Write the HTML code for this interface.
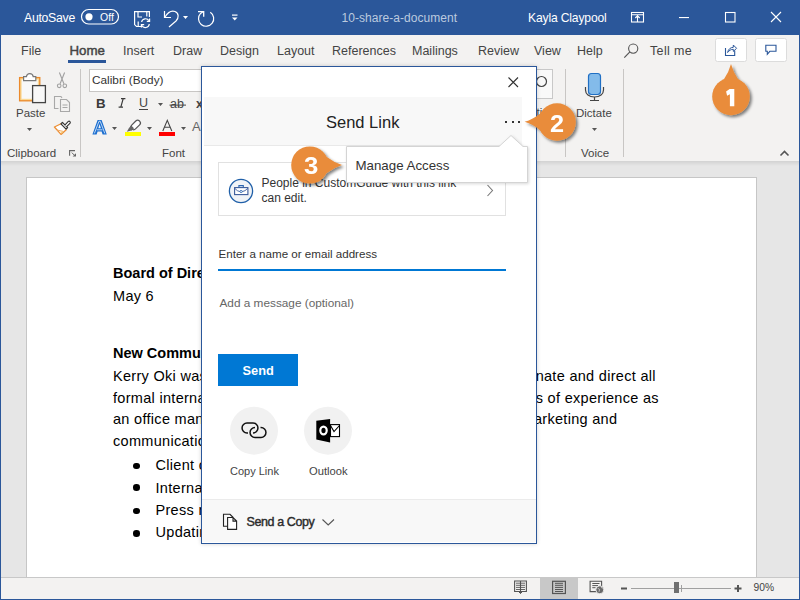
<!DOCTYPE html>
<html><head><meta charset="utf-8">
<style>
*{margin:0;padding:0;box-sizing:border-box}
html,body{width:800px;height:600px;overflow:hidden;background:#e6e6e6;font-family:"Liberation Sans",sans-serif}
.a{position:absolute;white-space:nowrap;line-height:1}
svg.a{overflow:visible}
.tw{color:#fff;font-size:11.5px}
.tab{color:#444;font-size:12.5px;top:45px}
.rl{color:#444;font-size:11.5px}
.doc{font-size:14.5px;color:#000}
.callout{width:38px;height:38px;border-radius:50%;background:#e98c3a;color:#fff;font-weight:bold;font-size:22px;text-align:center;line-height:38px}
</style></head><body>
<!-- TITLE BAR -->
<div class="a" style="left:0;top:0;width:800px;height:35px;background:#2b579a"></div>
<div class="a tw" style="left:24px;top:11.6px;font-size:12.3px;letter-spacing:-0.3px">AutoSave</div>
<svg class="a" style="left:0;top:0" width="800" height="35">
 <rect x="81.5" y="9.5" width="37" height="14.5" rx="7.25" fill="none" stroke="#fff" stroke-width="1.2"/>
 <circle cx="89" cy="16.8" r="3.6" fill="#fff"/>
 <!-- save icon -->
 <path d="M141.5 26.5 H136.5 L134.6 24.6 V11.6 H149.4 V17" fill="none" stroke="#fff" stroke-width="1.2"/>
 <path d="M138 11.6 V17 H142 M146.8 11.6 V16.5 M138.2 21.5 V26.5" fill="none" stroke="#fff" stroke-width="1.2"/>
 <path d="M141.6 22 A4 4 0 0 1 149 20.8 M149.3 24 A4 4 0 0 1 141.8 25.5" fill="none" stroke="#fff" stroke-width="1.2"/>
 <path d="M149.6 18.5 V21.3 H146.8 M141.4 27.5 V24.7 H144.2" fill="none" stroke="#fff" stroke-width="1.2"/>
 <!-- undo -->
 <path d="M164.5 11 V17.5 H171" fill="none" stroke="#fff" stroke-width="1.2"/>
 <path d="M165 17 C168 12 172 10.5 175 11.5 C179 13 179 18 176 21 L169 27" fill="none" stroke="#fff" stroke-width="1.2"/>
 <path d="M183 16 H188 L185.5 19 Z" fill="#fff"/>
 <!-- redo -->
 <path d="M210.3 12.3 A7.6 7.6 0 1 1 200.6 13.4 L203.2 11.6" fill="none" stroke="#fff" stroke-width="1.2"/>
 <path d="M198 11.6 H203.7 V16.8" fill="none" stroke="#fff" stroke-width="1.3"/>
 <!-- customize -->
 <rect x="232" y="14.5" width="5.5" height="1.2" fill="#fff"/>
 <path d="M232 17.5 H237.5 L234.75 20.5 Z" fill="#fff"/>
 <!-- ribbon display -->
 <rect x="631.5" y="12.5" width="12" height="9.5" fill="none" stroke="#fff" stroke-width="1.1"/>
 <path d="M631.5 14.8 H643.5 M637.5 15.5 V22 M635.3 18 L637.5 15.8 L639.7 18" fill="none" stroke="#fff" stroke-width="1.1"/>
 <rect x="679" y="17" width="10" height="1.1" fill="#fff"/>
 <rect x="725.5" y="12.5" width="9.5" height="9.5" fill="none" stroke="#fff" stroke-width="1.1"/>
 <path d="M771 12 L781 22 M781 12 L771 22" stroke="#fff" stroke-width="1.1"/>
</svg>
<div class="a" style="left:100px;top:11.9px;color:#fff;font-size:10.5px">Off</div>
<div class="a tw" style="left:341.5px;top:12.3px;color:#bccadf;font-size:12px;letter-spacing:0.05px">10-share-a-document</div>
<div class="a tw" style="left:528px;top:11.7px;font-size:12.1px;letter-spacing:-0.15px">Kayla Claypool</div>

<!-- RIBBON -->
<div class="a" style="left:1px;top:35px;width:798px;height:126px;background:#f3f2f1"></div>
<div class="a" style="left:1px;top:161px;width:798px;height:5px;background:linear-gradient(#d2d2d2,#e6e6e6)"></div>
<div class="a tab" style="left:21px">File</div>
<div class="a tab" style="left:69.5px;top:44.3px;color:#444;font-size:13.3px;-webkit-text-stroke:0.45px #444">Home</div>
<div class="a" style="left:68px;top:60px;width:38px;height:3px;background:#2b579a"></div>
<div class="a tab" style="left:123px">Insert</div>
<div class="a tab" style="left:173px">Draw</div>
<div class="a tab" style="left:220px">Design</div>
<div class="a tab" style="left:277px">Layout</div>
<div class="a tab" style="left:332px">References</div>
<div class="a tab" style="left:412px">Mailings</div>
<div class="a tab" style="left:478px">Review</div>
<div class="a tab" style="left:534px">View</div>
<div class="a tab" style="left:577px">Help</div>
<div class="a tab" style="left:650px;letter-spacing:0.35px">Tell me</div>

<!-- ribbon groups -->
<svg class="a" style="left:0;top:0" width="800" height="170">
 <!-- tab right buttons -->
 <rect x="715.5" y="38.5" width="31" height="23" rx="2" fill="#fff" stroke="#dcdcdc"/>
 <rect x="755.5" y="38.5" width="31" height="23" rx="2" fill="#fff" stroke="#dcdcdc"/>
 <path d="M725.5 48 V55.5 H734.7 V50.5" fill="none" stroke="#2b579a" stroke-width="1.1"/>
 <path d="M727.6 52.5 C728.3 49 730.5 47.5 733.3 47.3 V45 L736.6 48.3 L733.3 51.4 V49.3 C731 49.3 729 50.5 727.6 52.5 Z" fill="none" stroke="#2b579a" stroke-width="1"/>
 <path d="M765.8 45.3 H776 V51.3 H769.8 L767.3 54.3 V51.3 H765.8 Z" fill="none" stroke="#2b579a" stroke-width="1.1"/>
 <!-- search icon -->
 <circle cx="633.2" cy="48.6" r="4.6" fill="none" stroke="#555" stroke-width="1.1"/>
 <path d="M629.9 51.9 L624.3 57.6" stroke="#555" stroke-width="1.2"/>
 <!-- separators -->
 <rect x="80" y="69" width="1" height="88" fill="#c8c6c4"/>
 <rect x="565" y="69" width="1" height="88" fill="#c8c6c4"/>
 <rect x="623" y="69" width="1" height="88" fill="#c8c6c4"/>
 <!-- paste -->
 <rect x="19.6" y="77.6" width="20.2" height="23.2" fill="#fbd892" stroke="#ec8a2b" stroke-width="1.3"/>
 <rect x="21.6" y="79.6" width="16.2" height="19.2" fill="#f8f8f8"/>
 <path d="M23.6 80.6 V76.6 H26.4 C27 72.6 32.6 72.6 33.2 76.6 H35.8 V80.6 Z" fill="#fff" stroke="#777" stroke-width="1.2"/>
 <rect x="32.6" y="85.6" width="12.8" height="17" fill="#f8f8f8" stroke="#444" stroke-width="1.3"/>
 <path d="M27 128 H32 L29.5 131 Z" fill="#555"/>
 <!-- cut -->
 <path d="M59.4 72.5 L63.9 83.8 M64.6 72.5 L60.1 83.8" stroke="#a0a0a0" stroke-width="1.1"/>
 <circle cx="59.2" cy="85.8" r="1.8" fill="none" stroke="#a0a0a0" stroke-width="1.1"/>
 <circle cx="64.8" cy="85.8" r="1.8" fill="none" stroke="#a0a0a0" stroke-width="1.1"/>
 <!-- copy -->
 <path d="M58.5 108.5 H54.5 V96.5 H61 L62 98" fill="none" stroke="#a8a8a8" stroke-width="1.1"/>
 <path d="M60.5 99.5 H66.5 L69.5 102.5 V111.5 H60.5 Z M62.5 105 H67.5 M62.5 107.5 H67.5" fill="none" stroke="#a8a8a8" stroke-width="1.1"/>
 <!-- format painter -->
 <path d="M61.5 123.5 L54.4 127 L61 134.4 L66.5 129.5" fill="#fff" stroke="#ec8f35" stroke-width="1.3" stroke-linejoin="round"/>
 <path d="M57 130 L63.5 131.5" stroke="#f2a860" stroke-width="1"/>
 <path d="M60.5 131.8 L63.2 131.5 L61.5 133.5 Z" fill="#f7d37a"/>
 <path d="M60.9 123.9 L62.4 122.4 L67.6 127.6 L66.1 129.1 Z" fill="#fff" stroke="#333" stroke-width="1.2" stroke-linejoin="round"/>
 <path d="M64.8 125.1 L68.3 121.4 A1.3 1.3 0 0 1 70.1 123.2 L66.4 126.8" fill="#fff" stroke="#333" stroke-width="1.1"/>
 <!-- launcher -->
 <path d="M69.6 155.8 V150.6 H75" fill="none" stroke="#666" stroke-width="1.1"/>
 <path d="M71.8 152.6 L74.5 155.3" stroke="#666" stroke-width="1"/>
 <path d="M76 153.2 V156.6 H72.6 Z" fill="#666"/>
 <!-- font box -->
 <rect x="89.5" y="69.5" width="130" height="22" fill="#fff" stroke="#c8c6c4"/>
 <!-- underline and arrows -->
 <rect x="139" y="109" width="9" height="1" fill="#444"/>
 <path d="M158 103 H163 L160.5 106 Z M112 127 H117 L114.5 130 Z M147 127 H152 L149.5 130 Z M181 127 H186 L183.5 130 Z" fill="#555"/>
 <rect x="169.5" y="104.6" width="16.5" height="1" fill="#444"/>
 <!-- highlight pen -->
 <path d="M92.4 134.4 L97.6 120 H101.6 L106.8 134.4 H102.6 L101.6 131.4 H97.6 L96.6 134.4 Z M98.3 128.2 L99.6 124 L100.9 128.2 Z" fill="#1c6fd0" fill-rule="evenodd"/>
 <path d="M94.4 133.4 L99 121.2 H100.2 L104.8 133.4 M96.8 129.8 H102.4" fill="none" stroke="#e6f0fb" stroke-width="0.8"/>
 <path d="M121 98.7 H125.4 M118.6 107.2 H123 M123.2 98.7 L120.8 107.2" fill="none" stroke="#3a3a3a" stroke-width="1.2"/>

 <g transform="translate(0.3 1) rotate(-45 135 124.3)"><rect x="130" y="121.6" width="11" height="5.4" rx="2.6" fill="#fff" stroke="#555" stroke-width="1.2"/></g>
 <path d="M126.8 131.8 L129.3 127.5 L132.1 130.3 Z M128.5 128.4 L131.3 125.6 L134 128.3 L131.2 131.1 Z" fill="#666"/>
 <path d="M162.8 131 L167.3 120.3 L171.8 131 M164.4 127.3 H170.2" fill="none" stroke="#444" stroke-width="1.1"/>
 <rect x="125" y="132" width="16" height="4" fill="#ffff00"/>
 <rect x="159" y="132" width="16" height="4" fill="#ff0000"/>
 <!-- mic -->
 <rect x="588.5" y="73.5" width="12" height="21" rx="3" fill="#83bbea" stroke="#1f6fc4" stroke-width="1.2"/>
 <path d="M585.5 87 V90 C585.5 94 589 97 594.5 97 C600 97 603.5 94 603.5 90 V87 M594.5 97 V100 M590 100.5 H599" fill="none" stroke="#444" stroke-width="1.2"/>
 <path d="M592 128 H597 L594.5 131 Z" fill="#555"/>
 <!-- collapse caret -->
 <path d="M780.5 155.5 L784.5 151.5 L788.5 155.5" fill="none" stroke="#555" stroke-width="1.6"/>
 <!-- behind-dialog search box -->
 <rect x="520" y="69.5" width="32.5" height="29" fill="#f9f9f9" stroke="#c8c8c8"/>
 <circle cx="541.5" cy="81.5" r="5" fill="none" stroke="#444" stroke-width="1.2"/>
</svg>
<div class="a" style="left:92px;top:75px;color:#333;font-size:11.8px">Calibri (Body)</div>
<div class="a rl" style="left:16px;top:108px">Paste</div>
<div class="a rl" style="left:7px;top:147.6px">Clipboard</div>
<div class="a rl" style="left:162px;top:147.6px">Font</div>
<div class="a" style="left:96px;top:96.6px;font-weight:bold;color:#3a3a3a;font-size:13.3px">B</div>
<div class="a" style="left:139px;top:97px;color:#444;font-size:12.5px">U</div>
<div class="a" style="left:170px;top:98px;color:#444;font-size:12.5px">ab</div>
<div class="a" style="left:196px;top:98px;color:#444;font-size:12.5px;font-weight:bold">x</div>
<div class="a" style="left:192px;top:120px;color:#666;font-size:13px">A</div>
<div class="a rl" style="left:576px;top:108px">Dictate</div>
<div class="a rl" style="left:581px;top:147.6px">Voice</div>
<div class="a rl" style="left:536.5px;top:106.5px">ti</div>

<!-- DOCUMENT PAGE -->
<div class="a" style="left:26px;top:177px;width:731px;height:401px;background:#fff;border:1px solid #c6c6c6;border-bottom:none"></div>
<div class="a" style="left:113px;top:266.48px;font-size:14.5px;font-weight:bold">Board of Directors</div>
<div class="a" style="left:113px;top:289.33px;font-size:14.5px;letter-spacing:0.3px;">May 6</div>
<div class="a" style="left:113px;top:346.33px;font-size:14.5px;font-weight:bold">New Communications</div>
<div class="a" style="left:113px;top:369.13px;font-size:14.5px;letter-spacing:0.3px;">Kerry Oki was hired to</div>
<div class="a" style="left:113px;top:391.13px;font-size:14.5px;letter-spacing:0.3px;">formal internal</div>
<div class="a" style="left:113px;top:412.43px;font-size:14.5px;letter-spacing:0.3px;">an office manager</div>
<div class="a" style="left:113px;top:434.43px;font-size:14.5px;letter-spacing:0.3px;">communications.</div>
<div class="a" style="left:155.5px;top:458.48px;font-size:14.5px;letter-spacing:0.3px;">Client communications</div>
<div class="a" style="left:133.7px;top:462.8px;width:6.6px;height:6.6px;border-radius:50%;background:#000;margin:-0.3px 0 0 -0.3px"></div>
<div class="a" style="left:155.5px;top:481.03px;font-size:14.5px;letter-spacing:0.3px;">Internal</div>
<div class="a" style="left:133.7px;top:484.7px;width:6.6px;height:6.6px;border-radius:50%;background:#000;margin:-0.3px 0 0 -0.3px"></div>
<div class="a" style="left:155.5px;top:503.03px;font-size:14.5px;letter-spacing:0.3px;">Press releases</div>
<div class="a" style="left:133.7px;top:507.8px;width:6.6px;height:6.6px;border-radius:50%;background:#000;margin:-0.3px 0 0 -0.3px"></div>
<div class="a" style="left:155.5px;top:525.03px;font-size:14.5px;letter-spacing:0.3px;">Updating</div>
<div class="a" style="left:133.7px;top:530.7px;width:6.6px;height:6.6px;border-radius:50%;background:#000;margin:-0.3px 0 0 -0.3px"></div>
<div class="a" style="right:144.2px;top:369.13px;font-size:14.5px;letter-spacing:0.3px">coordinate and direct all</div>
<div class="a" style="right:141.2px;top:391.13px;font-size:14.5px;letter-spacing:0.3px">10 years of experience as</div>
<div class="a" style="right:182.7px;top:412.43px;font-size:14.5px;letter-spacing:0.3px">experience in marketing and</div>

<!-- STATUS BAR -->
<div class="a" style="left:1px;top:577px;width:798px;height:22px;background:#f3f2f1;border-top:1px solid #c8c8c8"></div>
<div class="a" style="left:540px;top:578px;width:38px;height:21px;background:#c8c8c8"></div>
<svg class="a" style="left:0;top:570px" width="800" height="30">
 <path d="M514.6 11 H520.5 V21.5 H514.6 Z M520.5 11 H526.4 V21.5 H520.5 Z" fill="none" stroke="#555" stroke-width="1.1"/>
 <path d="M516 13.2 H525 M516 15.3 H525 M516 17.4 H525 M516 19.5 H525" stroke="#555" stroke-width="0.9"/>
 <path d="M520.5 11 V23.5 M519 22 L520.5 23.5 L522 22" fill="none" stroke="#555" stroke-width="1"/>
 <rect x="552.6" y="11.3" width="12.8" height="12.2" fill="none" stroke="#555" stroke-width="1.2"/>
 <path d="M555 13.3 H563 M555 15.3 H563 M555 17.4 H563 M555 19.5 H563 M555 21.5 H563" stroke="#555" stroke-width="1"/>
 <path d="M597 21.6 H590.1 V11.3 H601.6 V16.5" fill="none" stroke="#555" stroke-width="1.1"/>
 <path d="M592.3 13.5 H599.5 M592.3 15.6 H598 M592.3 17.7 H595.5" stroke="#555" stroke-width="1"/>
 <circle cx="599.8" cy="19.8" r="4" fill="#6a6a6a" stroke="#f3f2f1" stroke-width="0.9"/>
 <path d="M597.6 18.2 L599.6 19.4 L599 21.8 M601.3 17 L602.3 18.5" stroke="#d8d8d8" stroke-width="0.8" fill="none"/>
 <rect x="621" y="17.5" width="6" height="2" fill="#555"/>
 <rect x="631" y="18" width="100" height="1" fill="#a0a0a0"/>
 <rect x="674" y="12" width="5" height="11" fill="#707070"/>
 <rect x="681" y="15" width="1" height="7" fill="#a0a0a0"/>
 <path d="M734.5 18.5 H741.5 M738 15 V22" stroke="#555" stroke-width="2"/>
</svg>
<div class="a" style="left:753.5px;top:583.2px;font-size:10.3px;color:#444">90%</div>
<!-- window borders -->
<div class="a" style="left:0;top:0;width:1px;height:600px;background:#2b579a"></div>
<div class="a" style="left:799px;top:0;width:1px;height:600px;background:#2b579a"></div>
<div class="a" style="left:0;top:599px;width:800px;height:1px;background:#2b579a"></div>

<!-- DIALOG -->
<div class="a" style="left:201px;top:66px;width:336px;height:478px;background:#fff;border:1px solid #2b579a;box-shadow:0 0 4px rgba(0,0,0,0.18)"></div>
<div class="a" style="left:204px;top:97px;width:318px;height:49px;background:#f8f8f8;border-bottom:1px solid #e9e9e9"></div>
<div class="a" style="left:202px;top:499px;width:334px;height:43px;background:#f8f8f8;border-top:1px solid #ebebeb"></div>
<div class="a" style="left:218px;top:162px;width:288px;height:54px;border:1px solid #e1e1e1;background:#fff"></div>
<div class="a" style="left:218px;top:269px;width:288px;height:1.5px;background:#0078d4"></div>
<div class="a" style="left:218px;top:354px;width:80px;height:32px;background:#0078d4"></div>
<svg class="a" style="left:0;top:0" width="800" height="600">
 <path d="M508.5 77.5 L518 87 M518 77.5 L508.5 87" stroke="#333" stroke-width="1.1"/>
 <rect x="505" y="121" width="2" height="2" fill="#333"/>
 <rect x="512" y="121" width="2" height="2" fill="#333"/>
 <rect x="518" y="121" width="2" height="2" fill="#333"/>
 <circle cx="241" cy="191" r="11.6" fill="#f0f3f7" stroke="#1f5fa8" stroke-width="1.3"/>
 <rect x="234.6" y="187.6" width="13.3" height="7" fill="#fff" stroke="#3a5a9a" stroke-width="1.1"/>
 <path d="M238.9 187.6 V185.6 H243.3 V187.6" fill="none" stroke="#2b65b0" stroke-width="1.1"/>
 <path d="M234.8 188.4 Q237.5 191.4 239.7 191.5 M242.5 191.5 Q244.8 191.4 247.7 188.4" fill="none" stroke="#3a5a9a" stroke-width="0.9"/>
 <ellipse cx="241.1" cy="191.5" rx="1.4" ry="0.95" fill="none" stroke="#2b65b0" stroke-width="0.9"/>
 <path d="M487.5 185 L492.5 190.5 L487.5 196" fill="none" stroke="#777" stroke-width="1.1"/>
 <circle cx="254" cy="430.7" r="24" fill="#f1f1f1"/>
 <circle cx="328" cy="430.7" r="24" fill="#f1f1f1"/>
 <path d="M248 432.9 H247 A4.95 4.95 0 0 1 247 423 H253 A4.95 4.95 0 0 1 253 432.9" fill="none" stroke="#111" stroke-width="1.5"/>
 <path d="M260.5 427.5 H261 A4.95 4.95 0 0 1 261 437.4 H255 A4.95 4.95 0 0 1 255 427.5" fill="none" stroke="#111" stroke-width="1.5"/>
 <path d="M316.3 420.8 L330.1 419 V442.4 L316.3 439.4 Z" fill="#000"/>
 <rect x="330.5" y="424.6" width="9" height="12" fill="#fff" stroke="#000" stroke-width="1.1"/>
 <path d="M330.5 425.5 L334 431.5 L339.5 425.5" fill="none" stroke="#000" stroke-width="1.1"/>
 <ellipse cx="323.5" cy="430.5" rx="3.2" ry="3.9" fill="none" stroke="#fff" stroke-width="2.2"/>
 <path d="M227.6 526.2 H223.5 V514.3 H230 L233.2 517.5" fill="none" stroke="#222" stroke-width="1.1"/>
 <path d="M227.6 517.5 H233 L236.6 521.1 V529.4 H227.6 Z M233 517.5 V521.1 H236.6" fill="#fff" stroke="#222" stroke-width="1.1"/>
 <path d="M322.5 519.5 L328.2 525 L334 519.5" fill="none" stroke="#555" stroke-width="1.1"/>
</svg>
<div class="a" style="left:326px;top:113.83px;font-size:16.5px;color:#222">Send Link</div>
<div class="a" style="left:261.5px;top:176.5px;font-size:12px;color:#333">People in CustomGuide with this link</div>
<div class="a" style="left:261.5px;top:191.9px;font-size:12px;color:#333">can edit.</div>
<div class="a" style="left:218.5px;top:248.18px;font-size:11.6px;color:#333">Enter a name or email address</div>
<div class="a" style="left:219.5px;top:297.51px;font-size:11.8px;color:#666">Add a message (optional)</div>
<div class="a" style="left:242.5px;top:365.16px;font-size:12.8px;color:#fff;font-weight:bold">Send</div>
<div class="a" style="left:230px;top:465.89px;font-size:11px;color:#444">Copy Link</div>
<div class="a" style="left:309px;top:465.72px;font-size:11.2px;color:#444">Outlook</div>
<div class="a" style="left:246.5px;top:515.6px;font-size:12.5px;color:#2a2a2a;letter-spacing:-0.4px;-webkit-text-stroke:0.4px #2a2a2a">Send a Copy</div>

<!-- POPUP -->
<svg class="a" style="left:0;top:0" width="800" height="600">
 <path d="M346.5 146.5 H499 L511 135.5 L523 146.5 H527.5 V182.5 H346.5 Z" fill="#fff" stroke="#d4d4d4" stroke-width="1" style="filter:drop-shadow(1px 1px 1.5px rgba(0,0,0,0.15))"/>
</svg>
<div class="a" style="left:355.5px;top:158.74px;font-size:13.3px;color:#333">Manage Access</div>

<!-- CALLOUTS -->
<svg class="a" style="left:0;top:0" width="800" height="600">
 <defs><filter id="sh" x="-50%" y="-50%" width="200%" height="200%"><feGaussianBlur in="SourceAlpha" stdDeviation="1.6"/><feOffset dx="1.5" dy="2" result="o"/><feComponentTransfer><feFuncA type="linear" slope="0.5"/></feComponentTransfer><feMerge><feMergeNode/><feMergeNode in="SourceGraphic"/></feMerge></filter></defs>
 <g filter="url(#sh)" fill="#e98c3a">
  <circle cx="731" cy="96.5" r="18.8"/><path d="M723.5 80 Q729 72 731 64 Q733 72 738.5 80 Z"/>
  <circle cx="557" cy="122" r="18.8"/><path d="M541 113 Q533 119.5 524.6 121.8 Q533 124 541 131 Z"/>
  <circle cx="309.8" cy="165" r="18.6"/><path d="M326 156.5 Q334 162.5 342 165 Q334 167.5 326 173.5 Z"/>
 </g>
 <path d="M729.6 89 H734.3 V106.2 H729.9 V94.2 L727.1 95.8 L726.1 91.6 Z" fill="#fff"/>
</svg>
<div class="a" style="left:550.3px;top:112.63px;font-size:23px;color:#fff;font-weight:bold;transform:scaleX(1.1);transform-origin:0 0">2</div>
<div class="a" style="left:304.2px;top:155.13px;font-size:23px;color:#fff;font-weight:bold;transform:scaleX(1.12);transform-origin:0 0">3</div>
</body></html>
